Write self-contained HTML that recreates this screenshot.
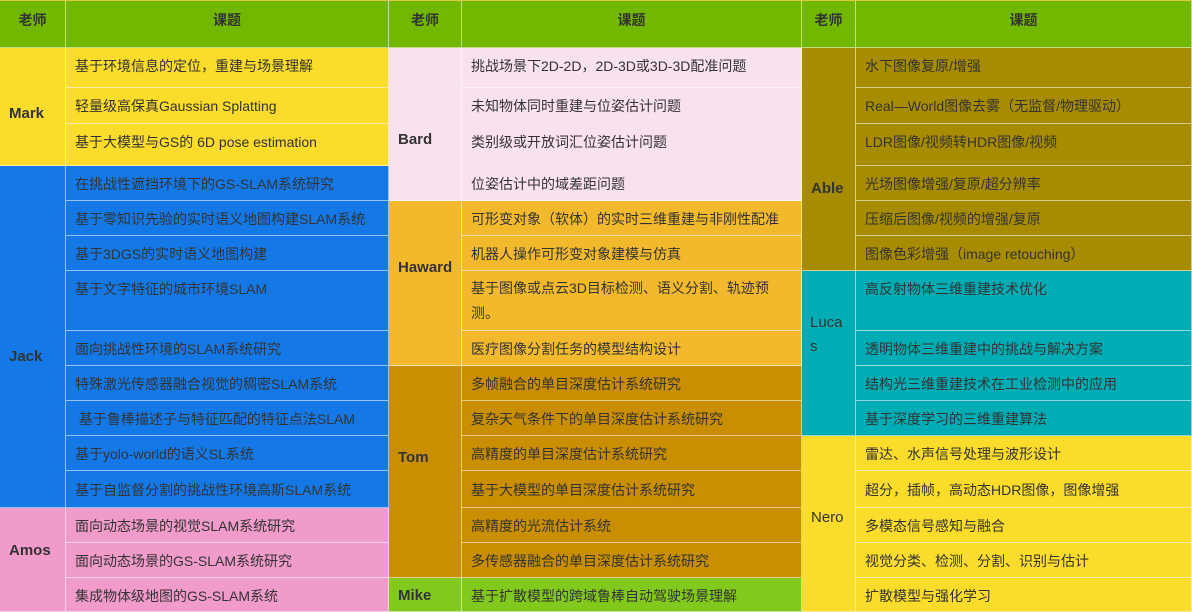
<!DOCTYPE html>
<html><head><meta charset="utf-8"><style>
body{margin:0;width:1192px;height:612px;overflow:hidden;background:#fff;font-family:"Liberation Sans","Noto Sans CJK SC",sans-serif;font-size:14px;color:#333;}
.c{position:absolute;box-sizing:border-box;border-right:1px solid rgba(255,255,255,.55);border-bottom:1px solid rgba(255,255,255,.55);white-space:nowrap;overflow:hidden;}
.t{padding:8px 0 0 9px;line-height:20px;}
.h{font-weight:bold;text-align:center;padding-top:9px;line-height:20px;background:#72b800;color:#333;}
.n{font-weight:bold;text-align:left;padding-left:9px;line-height:20px;font-size:15px;}
</style></head><body>
<div style="position:absolute;left:0;top:0;width:1192px;height:2px;background:#d8c84a"></div>
<div class="c h" style="left:0;top:1px;width:66px;height:47px">老师</div>
<div class="c h" style="left:66px;top:1px;width:323px;height:47px">课题</div>
<div class="c h" style="left:389px;top:1px;width:73px;height:47px">老师</div>
<div class="c h" style="left:462px;top:1px;width:340px;height:47px">课题</div>
<div class="c h" style="left:802px;top:1px;width:54px;height:47px">老师</div>
<div class="c h" style="left:856px;top:1px;width:336px;height:47px">课题</div>

<!-- group 1 -->
<div class="c n" style="left:0;top:48px;width:66px;height:118px;background:#fbdc2a;padding-top:56px">Mark</div>
<div class="c t" style="left:66px;top:48px;width:323px;height:40px;background:#fbdc2a">基于环境信息的定位，重建与场景理解</div>
<div class="c t" style="left:66px;top:88px;width:323px;height:36px;background:#fbdc2a;padding-top:8px">轻量级高保真Gaussian Splatting</div>
<div class="c t" style="left:66px;top:124px;width:323px;height:42px;background:#fbdc2a">基于大模型与GS的 6D pose estimation</div>
<div class="c n" style="left:0;top:166px;width:66px;height:342px;background:#1479e6;padding-top:181px">Jack</div>
<div class="c t" style="left:66px;top:166px;width:323px;height:35px;background:#1479e6">在挑战性遮挡环境下的GS-SLAM系统研究</div>
<div class="c t" style="left:66px;top:201px;width:323px;height:35px;background:#1479e6">基于零知识先验的实时语义地图构建SLAM系统</div>
<div class="c t" style="left:66px;top:236px;width:323px;height:35px;background:#1479e6">基于3DGS的实时语义地图构建</div>
<div class="c t" style="left:66px;top:271px;width:323px;height:60px;background:#1479e6">基于文字特征的城市环境SLAM</div>
<div class="c t" style="left:66px;top:331px;width:323px;height:35px;background:#1479e6">面向挑战性环境的SLAM系统研究</div>
<div class="c t" style="left:66px;top:366px;width:323px;height:35px;background:#1479e6">特殊激光传感器融合视觉的稠密SLAM系统</div>
<div class="c t" style="left:66px;top:401px;width:323px;height:35px;background:#1479e6">&nbsp;基于鲁棒描述子与特征匹配的特征点法SLAM</div>
<div class="c t" style="left:66px;top:436px;width:323px;height:35px;background:#1479e6">基于yolo-world的语义SL系统</div>
<div class="c t" style="left:66px;top:471px;width:323px;height:37px;background:#1479e6;padding-top:9px">基于自监督分割的挑战性环境高斯SLAM系统</div>
<div class="c n" style="left:0;top:508px;width:66px;height:104px;background:#f19bcb;padding-top:33px">Amos</div>
<div class="c t" style="left:66px;top:508px;width:323px;height:35px;background:#f19bcb">面向动态场景的视觉SLAM系统研究</div>
<div class="c t" style="left:66px;top:543px;width:323px;height:35px;background:#f19bcb">面向动态场景的GS-SLAM系统研究</div>
<div class="c t" style="left:66px;top:578px;width:323px;height:34px;background:#f19bcb;padding-top:8px">集成物体级地图的GS-SLAM系统</div>

<!-- group 2 -->
<div class="c n" style="left:389px;top:48px;width:73px;height:153px;background:#fae1ef;padding-top:82px">Bard</div>
<div class="c t" style="left:462px;top:48px;width:340px;height:40px;background:#fae1ef">挑战场景下2D-2D，2D-3D或3D-3D配准问题</div>
<div class="c t" style="left:462px;top:88px;width:340px;height:36px;background:#fae1ef;border-bottom:none;padding-top:8px">未知物体同时重建与位姿估计问题</div>
<div class="c t" style="left:462px;top:124px;width:340px;height:42px;background:#fae1ef;border-bottom:none">类别级或开放词汇位姿估计问题</div>
<div class="c t" style="left:462px;top:166px;width:340px;height:35px;background:#fae1ef">位姿估计中的域差距问题</div>
<div class="c n" style="left:389px;top:201px;width:73px;height:165px;background:#f2b92d;padding-top:57px">Haward</div>
<div class="c t" style="left:462px;top:201px;width:340px;height:35px;background:#f2b92d">可形变对象（软体）的实时三维重建与非刚性配准</div>
<div class="c t" style="left:462px;top:236px;width:340px;height:35px;background:#f2b92d">机器人操作可形变对象建模与仿真</div>
<div class="c t" style="left:462px;top:271px;width:340px;height:60px;background:#f2b92d;white-space:normal;line-height:25px;padding-top:5px;padding-right:10px">基于图像或点云3D目标检测、语义分割、轨迹预测。</div>
<div class="c t" style="left:462px;top:331px;width:340px;height:35px;background:#f2b92d">医疗图像分割任务的模型结构设计</div>
<div class="c n" style="left:389px;top:366px;width:73px;height:212px;background:#c98e02;padding-top:82px">Tom</div>
<div class="c t" style="left:462px;top:366px;width:340px;height:35px;background:#c98e02">多帧融合的单目深度估计系统研究</div>
<div class="c t" style="left:462px;top:401px;width:340px;height:35px;background:#c98e02">复杂天气条件下的单目深度估计系统研究</div>
<div class="c t" style="left:462px;top:436px;width:340px;height:35px;background:#c98e02">高精度的单目深度估计系统研究</div>
<div class="c t" style="left:462px;top:471px;width:340px;height:37px;background:#c98e02;padding-top:9px">基于大模型的单目深度估计系统研究</div>
<div class="c t" style="left:462px;top:508px;width:340px;height:35px;background:#c98e02">高精度的光流估计系统</div>
<div class="c t" style="left:462px;top:543px;width:340px;height:35px;background:#c98e02">多传感器融合的单目深度估计系统研究</div>
<div class="c n" style="left:389px;top:578px;width:73px;height:34px;background:#82c91e;padding-top:8px">Mike</div>
<div class="c t" style="left:462px;top:578px;width:340px;height:34px;background:#82c91e;padding-top:8px">基于扩散模型的跨域鲁棒自动驾驶场景理解</div>

<!-- group 3 -->
<div class="c n" style="left:802px;top:48px;width:54px;height:223px;background:#a88c00;padding-top:131px">Able</div>
<div class="c t" style="left:856px;top:48px;width:336px;height:40px;background:#a88c00">水下图像复原/增强</div>
<div class="c t" style="left:856px;top:88px;width:336px;height:36px;background:#a88c00;padding-top:8px">Real—World图像去雾（无监督/物理驱动）</div>
<div class="c t" style="left:856px;top:124px;width:336px;height:42px;background:#a88c00">LDR图像/视频转HDR图像/视频</div>
<div class="c t" style="left:856px;top:166px;width:336px;height:35px;background:#a88c00">光场图像增强/复原/超分辨率</div>
<div class="c t" style="left:856px;top:201px;width:336px;height:35px;background:#a88c00">压缩后图像/视频的增强/复原</div>
<div class="c t" style="left:856px;top:236px;width:336px;height:35px;background:#a88c00">图像色彩增强（image retouching）</div>
<div class="c" style="left:802px;top:271px;width:54px;height:165px;background:#00adb5;padding:40px 0 0 8px;line-height:24px;white-space:normal;font-size:15px">Luca<br>s</div>
<div class="c t" style="left:856px;top:271px;width:336px;height:60px;background:#00adb5">高反射物体三维重建技术优化</div>
<div class="c t" style="left:856px;top:331px;width:336px;height:35px;background:#00adb5">透明物体三维重建中的挑战与解决方案</div>
<div class="c t" style="left:856px;top:366px;width:336px;height:35px;background:#00adb5">结构光三维重建技术在工业检测中的应用</div>
<div class="c t" style="left:856px;top:401px;width:336px;height:35px;background:#00adb5">基于深度学习的三维重建算法</div>
<div class="c n" style="left:802px;top:436px;width:54px;height:176px;background:#fbdc2a;font-weight:normal;padding-top:72px">Nero</div>
<div class="c t" style="left:856px;top:436px;width:336px;height:35px;background:#fbdc2a">雷达、水声信号处理与波形设计</div>
<div class="c t" style="left:856px;top:471px;width:336px;height:37px;background:#fbdc2a;padding-top:9px">超分，插帧，高动态HDR图像，图像增强</div>
<div class="c t" style="left:856px;top:508px;width:336px;height:35px;background:#fbdc2a">多模态信号感知与融合</div>
<div class="c t" style="left:856px;top:543px;width:336px;height:35px;background:#fbdc2a">视觉分类、检测、分割、识别与估计</div>
<div class="c t" style="left:856px;top:578px;width:336px;height:34px;background:#fbdc2a;padding-top:8px">扩散模型与强化学习</div>
</body></html>
